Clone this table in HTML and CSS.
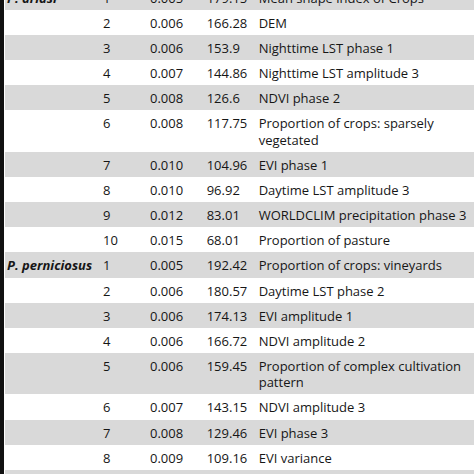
FILE: index.html
```html
<!DOCTYPE html>
<html>
<head>
<meta charset="utf-8">
<link rel="stylesheet" href="styles.css">
</head>
<body>
<div class="page">
  <div class="edge"></div>
  <table class="tbl">
    <colgroup>
      <col class="c1"><col class="c2"><col class="c3"><col class="c4"><col class="c5">
    </colgroup>
    <tbody>
      <tr class="sh"><td class="sp">P. ariasi</td><td>1</td><td>0.005</td><td>179.15</td><td>Mean shape index of Crops</td></tr>
      <tr><td></td><td>2</td><td>0.006</td><td>166.28</td><td>DEM</td></tr>
      <tr class="sh"><td></td><td>3</td><td>0.006</td><td>153.9</td><td>Nighttime LST phase 1</td></tr>
      <tr><td></td><td>4</td><td>0.007</td><td>144.86</td><td>Nighttime LST amplitude 3</td></tr>
      <tr class="sh"><td></td><td>5</td><td>0.008</td><td>126.6</td><td>NDVI phase 2</td></tr>
      <tr><td></td><td>6</td><td>0.008</td><td>117.75</td><td>Proportion of crops: sparsely vegetated</td></tr>
      <tr class="sh"><td></td><td>7</td><td>0.010</td><td>104.96</td><td>EVI phase 1</td></tr>
      <tr><td></td><td>8</td><td>0.010</td><td>96.92</td><td>Daytime LST amplitude 3</td></tr>
      <tr class="sh"><td></td><td>9</td><td>0.012</td><td>83.01</td><td>WORLDCLIM precipitation phase 3</td></tr>
      <tr><td></td><td>10</td><td>0.015</td><td>68.01</td><td>Proportion of pasture</td></tr>
      <tr class="sh"><td class="sp">P. perniciosus</td><td>1</td><td>0.005</td><td>192.42</td><td>Proportion of crops: vineyards</td></tr>
      <tr><td></td><td>2</td><td>0.006</td><td>180.57</td><td>Daytime LST phase 2</td></tr>
      <tr class="sh"><td></td><td>3</td><td>0.006</td><td>174.13</td><td>EVI amplitude 1</td></tr>
      <tr><td></td><td>4</td><td>0.006</td><td>166.72</td><td>NDVI amplitude 2</td></tr>
      <tr class="sh"><td></td><td>5</td><td>0.006</td><td>159.45</td><td>Proportion of complex cultivation pattern</td></tr>
      <tr><td></td><td>6</td><td>0.007</td><td>143.15</td><td>NDVI amplitude 3</td></tr>
      <tr class="sh"><td></td><td>7</td><td>0.008</td><td>129.46</td><td>EVI phase 3</td></tr>
      <tr><td></td><td>8</td><td>0.009</td><td>109.16</td><td>EVI variance</td></tr>
      <tr class="sh"><td>&nbsp;</td><td></td><td></td><td></td><td></td></tr>
    </tbody>
  </table>
</div>
</body>
</html>
```

FILE: styles.css
```css
html, body {
  margin: 0;
  padding: 0;
  background: #fff;
  overflow: hidden;
}
.page {
  display: flex;
  width: 474px;
  height: 474px;
  overflow: hidden;
}
.edge {
  flex: 0 0 4px;
  background: #111;
  margin-right: 1px;
}
.tbl {
  flex: 0 0 469px;
  width: 469px;
  margin-top: -15px;
  border-collapse: collapse;
  table-layout: fixed;
  align-self: flex-start;
  font-family: "Open Sans", "Noto Sans", sans-serif;
  font-size: 13px;
  line-height: 16.5px;
  color: #161616;
}
.c1 { width: 96px; }
.c2 { width: 47px; }
.c3 { width: 56.7px; }
.c4 { width: 52px; }
.c5 { width: 217.3px; }
.tbl td {
  padding: 5px 2px 3.6px 2px;
  vertical-align: top;
  text-align: left;
}
.tbl td:last-child {
  padding-right: 0;
}
.tbl tr.sh td {
  background: #d9d9d9;
}
.tbl td.sp {
  font-weight: bold;
  font-style: italic;
}
```
